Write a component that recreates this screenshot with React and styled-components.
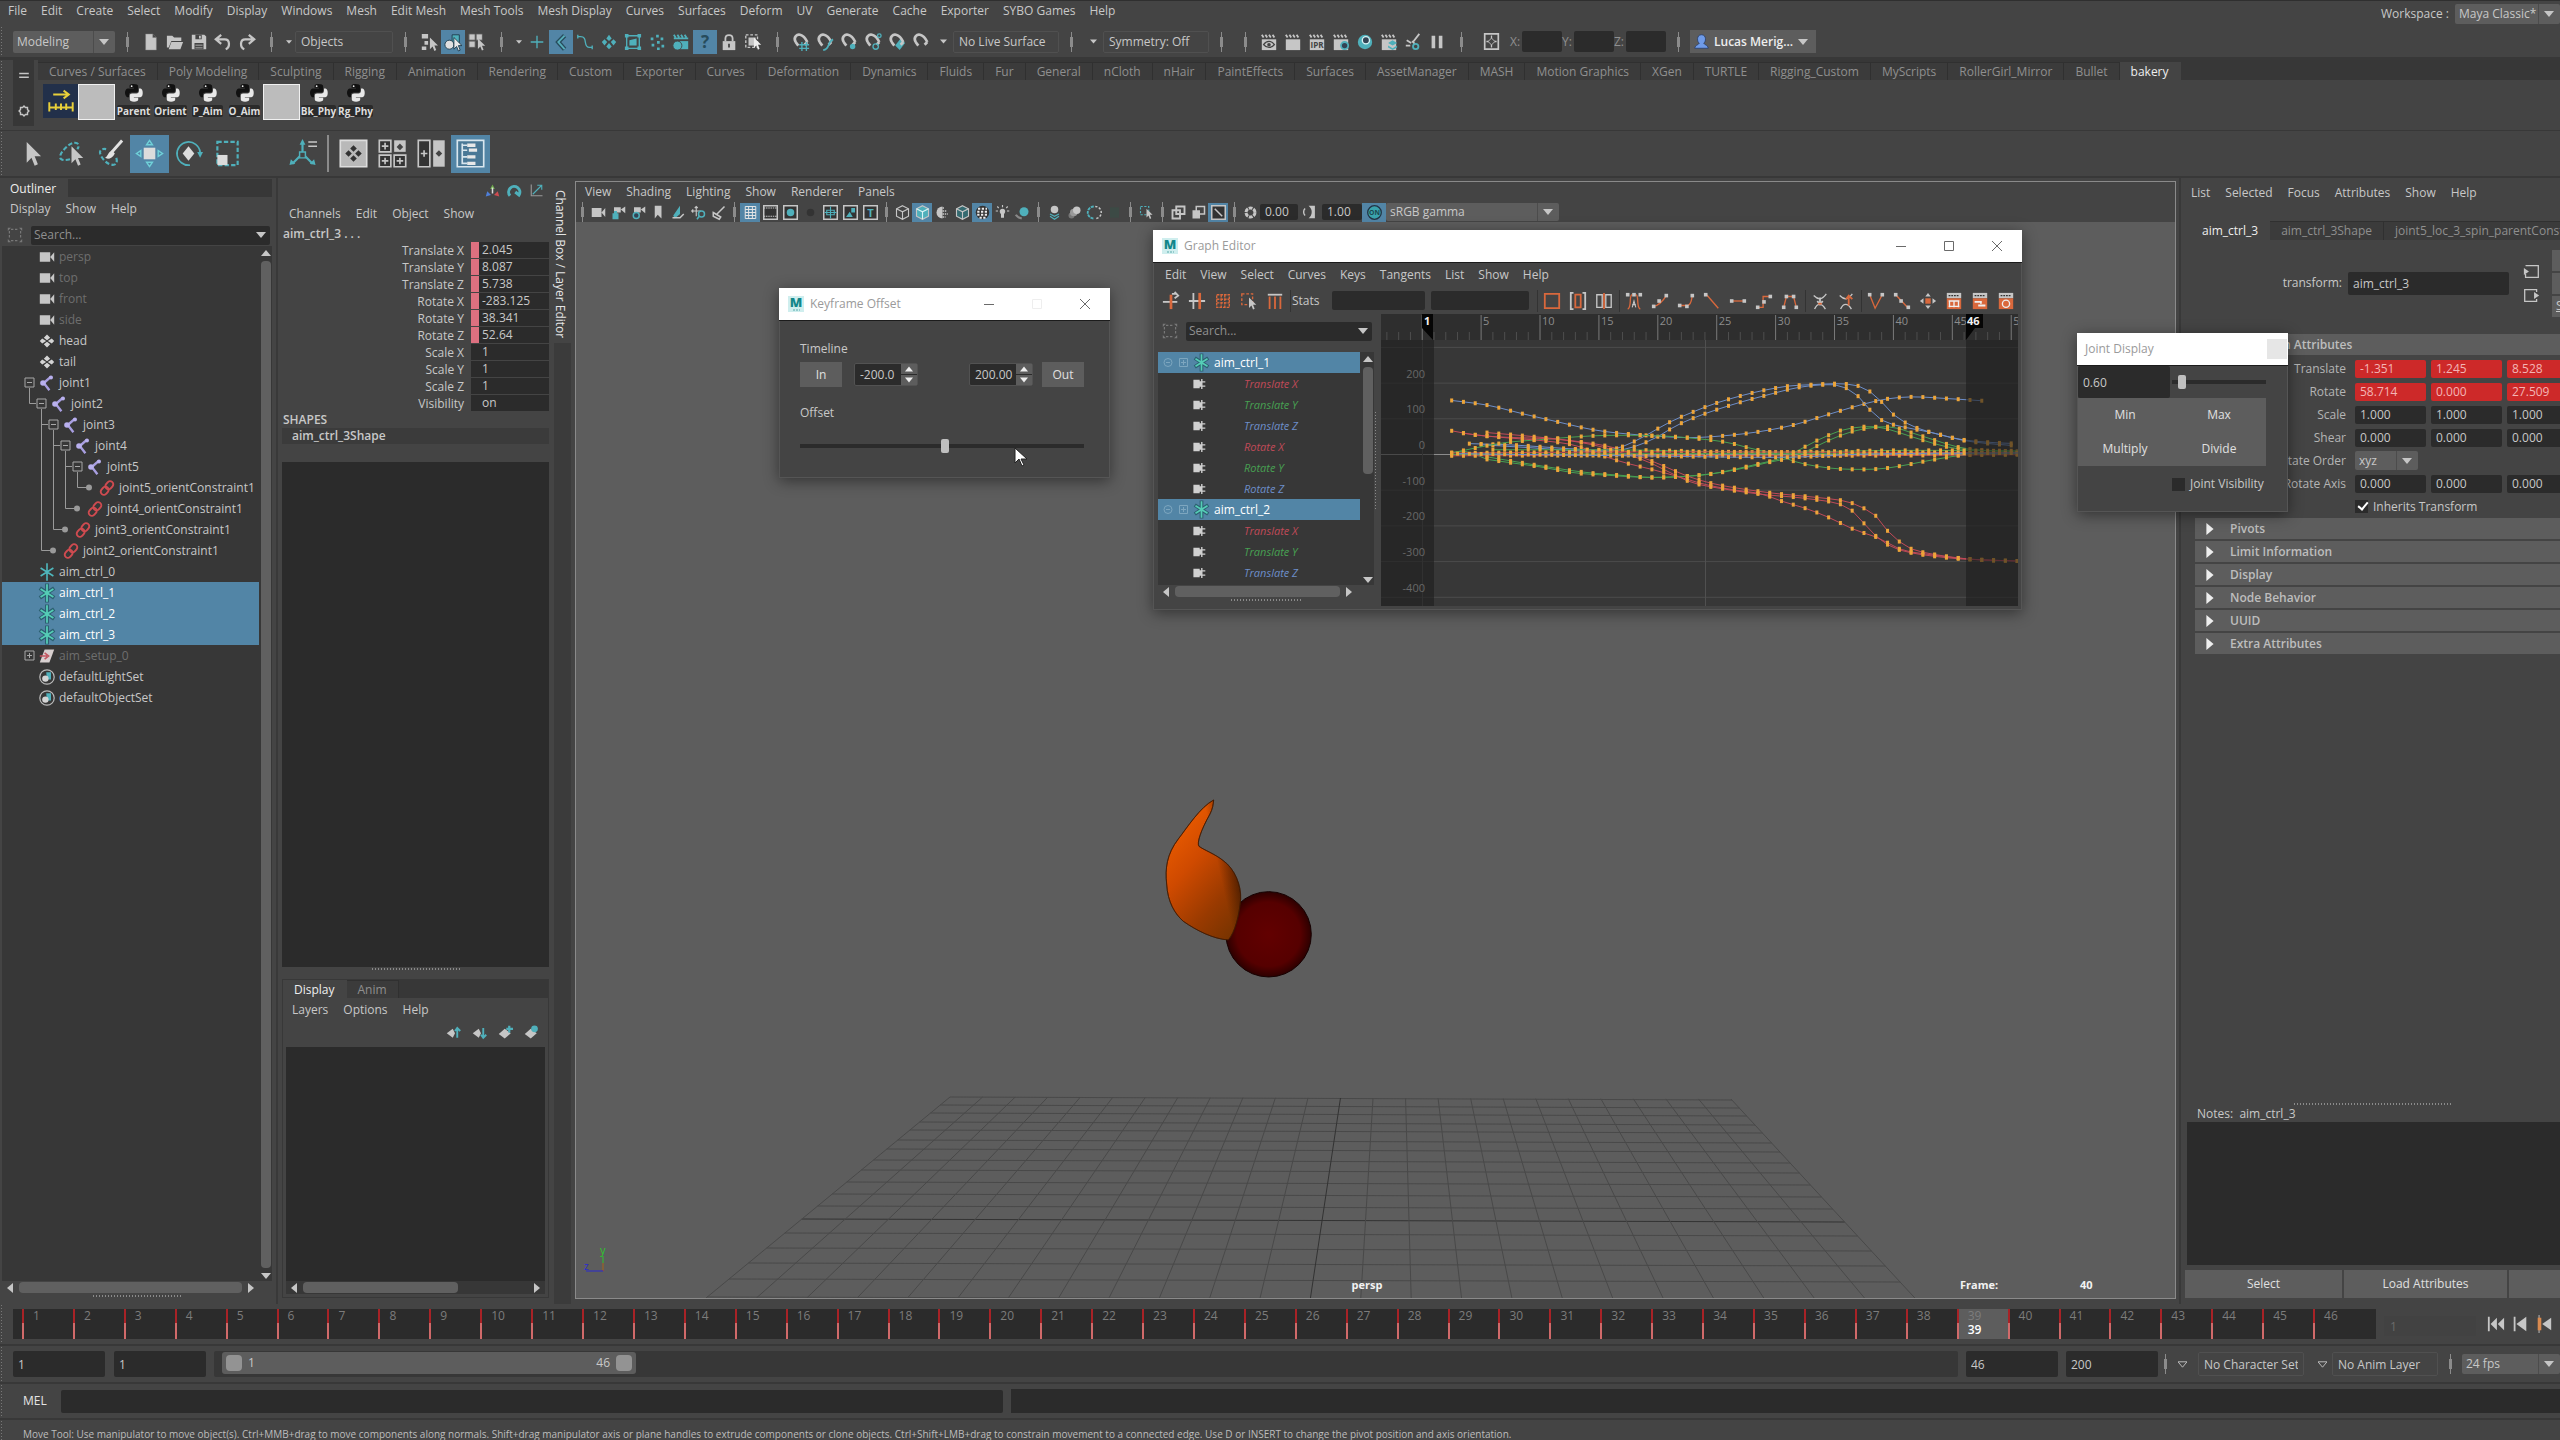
import React from 'react'
import styled, { createGlobalStyle, css } from 'styled-components'

const BASE = '#444444'
const MID = '#373737'
const DARK = '#2b2b2b'
const LIGHT = '#5d5d5d'
const BLUE = '#5285a6'
const TEXT = '#c8c8c8'
const DIM = '#8f8f8f'
const TEAL = '#4fb0bb'
const ICON = '#c6c6c6'
const ORANGE = '#d9683c'

const GlobalStyle = createGlobalStyle`
  * {
    box-sizing: border-box;
  }
  body {
    margin: 0;
    overflow: hidden;
    background: ${BASE};
  }
  body, button, input, select, textarea {
    font-family: 'Open Sans', 'Noto Sans', sans-serif;
    font-size: 12px;
    line-height: 16px;
    color: ${TEXT};
  }
  button, input, select, textarea {
    margin: 0;
    padding: 0;
    border: 0;
    outline: 0;
    border-radius: 0;
    background: none;
    min-width: 0;
  }
  ul {
    margin: 0;
    padding: 0;
    list-style: none;
  }
  svg {
    display: block;
    flex-shrink: 0;
  }
`

/* ---------- icons ---------- */

const stroke = (color, width = 1.5) => ({ fill: 'none', stroke: color, strokeWidth: width })

const Arrow = ({ x = 0, y = 0, s = 1, fill = ICON }) => (
  <path transform={`translate(${x} ${y}) scale(${s})`} d='M0 0v13l3-3 2 5 2-1-2-5h4z' fill={fill} />
)
const Clap = () => (
  <>
    <path d='M2 7h16v12H2z' fill={ICON} />
    <path d='M2 2l2 3M6 2l2 3M10 2l2 3M14 2l2 3' {...stroke(ICON, 2)} />
  </>
)
const Magnet = () => <path d='M4 10C1 4 6 1 9 2c4 1 6 4 8 8M4 10l3 4M17 10l-3 3' {...stroke(ICON, 3)} />
const Film = ({ children }) => (
  <>
    <path d='M1 1h18v18H1z' fill='#333' stroke={ICON} strokeWidth='2' />
    {children}
  </>
)
const Keys = ({ pts, line }) => (
  <>
    <path d={line} {...stroke(ORANGE, 1.5)} />
    {pts.map(([x, y]) => (
      <rect key={`${x}-${y}`} x={x - 2} y={y - 2} width='4' height='4' fill={ICON} />
    ))}
  </>
)
const Cube = ({ fill }) => (
  <>
    <path d='M10 1l8 4v10l-8 4-8-4V5z' fill={fill} stroke={ICON} strokeWidth='1.5' />
    <path d='M2 5l8 4 8-4M10 9v10' {...stroke(fill === TEAL ? '#d8f4f6' : ICON)} />
  </>
)
const Panel = ({ children }) => (
  <>
    <path d='M2 1h16v6H2z' fill={ICON} />
    <path d='M2 7h16v12H2z' fill={ORANGE} />
    <path d='M4 4h2M7 4h2M10 4h2M13 4h2' {...stroke('#333')} />
    {children}
  </>
)

const icons = {
  file: <path d='M4 1h8l4 4v14H4zM12 1v4h4' fill={ICON} stroke='#777' strokeWidth='.5' />,
  open: <path d='M1 3h6l2 2h8v4H6l-3 7H1zM6 10h13l-3 8H3z' fill={ICON} />,
  save: (
    <>
      <path d='M2 2h14l2 2v14H2z' fill={ICON} />
      <path d='M6 2h7v5H6zM5 11h10v7H5z' fill='#444' />
      <path d='M10 3h2v3h-2zM6 13h8v1H6zM6 16h8v1H6z' fill={ICON} />
    </>
  ),
  undo: <path d='M8 2L2 7l6 5M3 7h9c6 0 6 9 1 11' {...stroke(ICON, 2.5)} />,
  redo: <path d='M12 2l6 5-6 5M17 7H8c-6 0-6 9-1 11' {...stroke(ICON, 2.5)} />,
  hier: (
    <>
      <path d='M2 1h7v5H2zM5 9h4v4H5zM2 15h5v4H2z' fill={ICON} />
      <Arrow x={11} y={5} s={1} />
    </>
  ),
  objsel: (
    <>
      <path d='M9 2h8v9H9z' fill={TEAL} stroke='#1d3b4c' />
      <circle cx='6' cy='13' r='5' fill='#e0e0e0' stroke='#1d3b4c' />
      <g stroke='#1d3b4c'>
        <Arrow x={11} y={5} s={1} fill='#e8e8e8' />
      </g>
    </>
  ),
  compsel: (
    <>
      <path d='M1 1h7v7H1zM9 1h7v7H9zM1 9h7v7H1z' fill={ICON} stroke='#555' />
      <Arrow x={11} y={6} s={0.9} />
    </>
  ),
  plus: <path d='M10 3v14M3 10h14' {...stroke(TEAL, 1.5)} />,
  jointsel: (
    <>
      <path d='M14 3L7 10l7 8' {...stroke('#274c5c', 5)} />
      <path d='M14 3L7 10l7 8' {...stroke('#57aebb', 2)} />
    </>
  ),
  curvesel: <path d='M2 4h3c9 0 2 12 10 12h3M2 2v4M18 14v4' {...stroke(TEAL, 1.5)} />,
  surfsel: <path d='M10 2l3 4-3 3-3-3zM5 7l3 3-3 4-3-4zM15 7l3 3-3 4-3-4zM10 11l3 4-3 3-3-3z' fill={TEAL} />,
  defsel: (
    <>
      <path d='M3 3h14v14H3z' {...stroke(TEAL)} />
      <path d='M6 14V8l8-2v8M1 1h4v4H1zM15 1h4v4h-4zM1 15h4v4H1zM15 15h4v4h-4z' fill={TEAL} />
    </>
  ),
  dynsel: <path d='M3 5h3v3H3zM9 2h3v3H9zM14 5h3v3h-3zM4 12h3v3H4zM10 9h3v3h-3zM10 16h3v3h-3zM15 13h3v3h-3z' fill={TEAL} />,
  rendsel: (
    <>
      <path d='M2 6h16M2 2l2 3M6 2l2 3M10 2l2 3M14 2l2 3' {...stroke(TEAL, 2)} />
      <path d='M9 9h9v9H9z' fill={TEAL} />
      <circle cx='6' cy='14' r='5' fill={TEAL} stroke='#444' />
    </>
  ),
  misc: (
    <text x='10' y='17' textAnchor='middle' fontSize='19' fontWeight='700' fill='#274c5c'>
      ?
    </text>
  ),
  lock: (
    <>
      <path d='M6 9V6c0-5 8-5 8 0v3' {...stroke(ICON, 2)} />
      <path d='M3 9h14v10H3z' fill={ICON} />
      <path d='M9 12h2v4H9z' fill='#444' />
    </>
  ),
  hilite: (
    <>
      <path d='M2 2h13v14H2z' {...stroke(ICON, 1.5)} strokeDasharray='3 2' />
      <path d='M5 5h8v9H5z' fill={ICON} />
      <Arrow x={11} y={5} s={0.9} fill='#eee' />
    </>
  ),
  snapGrid: (
    <>
      <Magnet />
      <path d='M8 13h11M8 17h11M11 10v10M16 10v10' {...stroke(TEAL)} />
    </>
  ),
  snapCurve: (
    <>
      <Magnet />
      <path d='M8 19c8-1 4-9 11-12' {...stroke(TEAL, 2)} />
    </>
  ),
  snapPoint: (
    <>
      <Magnet />
      <circle cx='14' cy='15' r='3' fill={TEAL} />
    </>
  ),
  snapCenter: (
    <>
      <Magnet />
      <circle cx='13' cy='15' r='3' {...stroke(TEAL)} />
      <circle cx='17' cy='3' r='2' {...stroke(TEAL)} />
    </>
  ),
  snapPlane: (
    <>
      <path d='M8 14l6-8 5 5-6 8z' fill={TEAL} />
      <Magnet />
    </>
  ),
  snapLive: <Magnet />,
  renderView: (
    <>
      <Clap />
      <path d='M4 13c3-5 9-5 12 0-3 4-9 4-12 0z' {...stroke('#444')} />
      <circle cx='10' cy='13' r='2' fill='#444' />
    </>
  ),
  render: <Clap />,
  ipr: (
    <>
      <Clap />
      <text x='10' y='17' textAnchor='middle' fontSize='9' fontWeight='700' fill='#444'>
        IPR
      </text>
    </>
  ),
  renderSet: (
    <>
      <Clap />
      <circle cx='14' cy='14' r='4' fill='#345' stroke={TEAL} strokeWidth='2' />
    </>
  ),
  hyper: (
    <>
      <circle cx='10' cy='10' r='8' fill={TEAL} />
      <circle cx='11' cy='8' r='4' fill='#345' stroke='#d8f4f6' strokeWidth='1.5' />
    </>
  ),
  layersR: (
    <>
      <Clap />
      <path d='M14 8l5 3-5 3-5-3zM9 14l5 3 5-3v2l-5 3-5-3z' fill={TEAL} />
    </>
  ),
  lightEd: (
    <>
      <path d='M17 1l-7 9M3 8l5 3M2 14h5M9 9l3 3' {...stroke(ICON, 2)} />
      <circle cx='13' cy='15' r='3' {...stroke(TEAL, 2)} />
    </>
  ),
  pause: <path d='M4 3h4v14H4zM12 3h4v14h-4z' fill={ICON} />,
  pivot: (
    <>
      <path d='M2 1h16v18H2z' {...stroke(ICON, 2)} />
      <path d='M10 3v14M4 10h12' {...stroke(ICON)} />
      <path d='M10 6l4 4-4 4-4-4z' fill='#444' stroke={ICON} />
    </>
  ),
  user: <path d='M10 1c7 0 6 10 3 11 1 3 5 2 6 7H1c1-5 5-4 6-7C4 11 3 1 10 1z' fill='#6f9be8' stroke='#233a66' />,
  select: <Arrow x={6} y={2} s={1.1} />,
  lasso: (
    <>
      <path d='M9 14C1 16 0 12 6 6s11-3 8 1' {...stroke(TEAL)} strokeDasharray='3 1.5' />
      <Arrow x={10} y={5} s={0.9} />
    </>
  ),
  paint: (
    <>
      <path d='M14 13c2 6-4 6-8 2S1 6 7 7' {...stroke(TEAL)} strokeDasharray='3 1.5' />
      <path d='M18 1l-7 8' {...stroke('#e2e2e2', 2)} />
      <path d='M11 8l2 2c-2 4-5 4-7 3 2 0 2-4 5-5z' fill='#e2e2e2' />
    </>
  ),
  move: (
    <>
      <path d='M6 6h8v8H6z' fill='#dcdcdc' />
      <path d='M10 1l2 3H8zM10 19l2-3H8zM1 10l3-2v4zM19 10l-3-2v4z' {...stroke('#6fd0d8', 1)} />
    </>
  ),
  rotate: (
    <>
      <path d='M10 5l4 5-4 5-4-5z' fill='#dcdcdc' />
      <path d='M11 18A8 8 0 1 1 18 9' {...stroke(TEAL, 1.2)} />
      <path d='M16 9h4l-2 4z' fill={TEAL} />
    </>
  ),
  scale: (
    <>
      <path d='M3 2h14v16H3z' {...stroke(TEAL)} strokeDasharray='3 1.5' />
      <path d='M3 11h7v7H3z' fill='#dcdcdc' />
    </>
  ),
  axes: (
    <>
      <path d='M10 10V3M10 10l-7 7M10 10l7 7' {...stroke(TEAL)} />
      <path d='M10 0l2 4H8zM1 18l1-4 3 3zM19 18l-1-4-3 3z' fill={TEAL} />
      <path d='M8 9h4v4H8z' fill='#444' stroke={TEAL} />
      <path d='M14 2h6M14 5h6' {...stroke(ICON, 1)} />
    </>
  ),
  single: (
    <>
      <path d='M2 2h16v16H2z' fill='#b9b9b9' stroke='#ddd' />
      <path d='M10 5l2 2-2 2-2-2zM10 11l2 2-2 2-2-2zM7 8l2 2-2 2-2-2zM13 8l2 2-2 2-2-2z' fill='#333' />
    </>
  ),
  four: (
    <>
      <path d='M2 2h7v7H2zM2 11h7v7H2zM11 11h7v7h-7z' fill='#333' stroke={ICON} />
      <path d='M11 2h7v7h-7z' fill={ICON} />
      <path d='M5.500 3.500v4M3.500 5.500h4M5.500 12.500v4M3.500 14.500h4M14.500 12.500v4M12.500 14.500h4' {...stroke(ICON, 1)} />
      <path d='M14.500 4l2 2-2 2-2-2z' fill='#444' />
    </>
  ),
  two: (
    <>
      <path d='M2 2h7v16H2z' fill='#333' stroke={ICON} />
      <path d='M11 2h7v16h-7z' fill={ICON} />
      <path d='M5.500 8v4M3.500 10h4' {...stroke(ICON, 1)} />
      <path d='M14.500 8l2 2-2 2-2-2z' fill='#444' />
    </>
  ),
  outl: (
    <>
      <path d='M2 2h16v16H2z' fill='#4a7896' stroke='#d8e6ee' />
      <path d='M5 4v12h3M5 8h3M5 12h3M5 5h3' {...stroke('#d8e6ee', 1)} />
      <path d='M8 4h5v2H8zM9 7h5v2H9zM8 11h5v2H8zM8 15h5v2H8z' fill='#e8e8e8' />
    </>
  ),
  bars: <path d='M2 6h16M2 12h16' {...stroke(ICON, 2.5)} />,
  gear: <path d='M10 3l2 2 3 0 0 3 2 2-2 2 0 3-3 0-2 2-2-2-3 0 0-3-2-2 2-2 0-3 3 0z' {...stroke(ICON, 2)} />,
  frame: (
    <>
      <path d='M5 3h10M5 17h10M3 5v10M17 5v10' {...stroke('#777')} strokeDasharray='3 2' />
      <path d='M1 1h4l-4 4zM19 1v4l-4-4zM1 19v-4l4 4zM19 19h-4l4-4z' fill='#777' />
    </>
  ),
  camera: <path d='M1 4h13v12H1zM14 10l5-6v12z' fill={ICON} />,
  camLock: (
    <>
      <path d='M4 3h9v7H4zM13 6l6-4v9z' fill={ICON} />
      <path d='M2 11h8v8H2zM4 11V8h4v3' fill={TEAL} />
    </>
  ),
  camSet: (
    <>
      <path d='M4 3h9v7H4zM13 6l6-4v9z' fill={ICON} />
      <circle cx='7' cy='14' r='4' fill='#345' stroke={TEAL} strokeWidth='2' />
    </>
  ),
  bookmark: <path d='M5 1h9v17l-5-5-4 5z' fill={ICON} />,
  imgPlane: (
    <>
      <path d='M3 14L12 1v11l-7 6z' fill={TEAL} />
      <path d='M2 17h10l5-5' {...stroke(ICON, 2)} />
    </>
  ),
  panZoom: (
    <>
      <path d='M7 2v13M1 8h12M5 4l2-2 2 2M3 6L1 8l2 2' {...stroke(ICON)} />
      <circle cx='14' cy='12' r='4' {...stroke(TEAL, 2)} />
      <path d='M11 15l-3 4' {...stroke(TEAL, 2)} />
    </>
  ),
  grease: <path d='M18 2L8 12M3 10l5 3 5 3-2 3-8-4z' {...stroke(ICON, 2)} />,
  grid: <path d='M3 2h14v16H3zM7.500 2v16M12.500 2v16M3 6h14M3 10h14M3 14h14' {...stroke('#e6e6e6', 1.3)} />,
  filmGate: <Film><path d='M1 4h18M1 15h18' {...stroke(ICON, 1.5)} strokeDasharray='2 1' /></Film>,
  resGate: <Film><circle cx='10' cy='10' r='5' fill={TEAL} /></Film>,
  mask: <circle cx='10' cy='10' r='5' fill='#333' />,
  fieldChart: <Film><path d='M10 2v16M2 10h16M5 7h10v6H5z' {...stroke(TEAL)} /></Film>,
  safeAct: <Film><path d='M4 16l5-7 4 7zM11 4h5v6h-5z' fill={TEAL} /></Film>,
  safeTitle: (
    <Film>
      <text x='10' y='16' textAnchor='middle' fontSize='15' fontWeight='700' fill={TEAL}>
        T
      </text>
    </Film>
  ),
  wire: <Cube fill='none' />,
  shaded: <Cube fill={TEAL} />,
  halfball: (
    <>
      <path d='M10 2a8 8 0 0 0 0 16z' fill={ICON} />
      <path d='M10 4h3M10 8h6M10 12h7M10 16h4' {...stroke(ICON, 2)} strokeDasharray='2 1' />
    </>
  ),
  wireShade: <Cube fill='#356a70' />,
  checker: (
    <>
      <circle cx='10' cy='10' r='9' fill='#333' />
      <path d='M4 5h12M3 9h14M3 13h14M6 17h9' {...stroke('#eee', 2.5)} strokeDasharray='3 2' />
    </>
  ),
  bulb: (
    <>
      <path d='M10 5c5 0 4 6 2 7v5H8v-5C6 11 5 5 10 5z' fill={ICON} />
      <path d='M10 0v3M1 8h3M16 8h3M3 2l2 2M17 2l-2 2' {...stroke(ICON)} />
    </>
  ),
  shadow: (
    <>
      <circle cx='12' cy='9' r='6' fill={TEAL} />
      <path d='M1 13c2 3 4 4 8 5' {...stroke('#888', 3)} />
    </>
  ),
  ao: (
    <>
      <circle cx='10' cy='6' r='5' fill={ICON} />
      <path d='M4 12l6 3 6-3M4 15l6 4 6-4' {...stroke(TEAL)} />
    </>
  ),
  mblur: (
    <>
      <circle cx='6' cy='14' r='4' fill='#777' />
      <circle cx='9' cy='10' r='5' fill='#999' />
      <circle cx='13' cy='7' r='5' fill={ICON} />
    </>
  ),
  msaa: (
    <>
      <path d='M9 2a8 8 0 0 0 0 16' {...stroke(TEAL, 2.5)} strokeDasharray='4 1' />
      <path d='M11 2a8 8 0 0 1 0 16' {...stroke(ICON, 2)} strokeDasharray='3 2' />
    </>
  ),
  dof: <path d='M4 3h12v14H4z' fill='#3c4a45' />,
  isolate: (
    <>
      <path d='M2 2h11v11H2z' {...stroke(TEAL)} strokeDasharray='3 2' />
      <Arrow x={10} y={5} s={0.9} />
    </>
  ),
  copyA: <path d='M7 2h11v10H7zM2 7h10v11H2z' {...stroke(ICON, 2.5)} />,
  copyB: (
    <>
      <path d='M7 2h11v10H7z' {...stroke(ICON, 2)} />
      <path d='M2 7h10v11H2z' fill={ICON} />
    </>
  ),
  diag: <Film><path d='M5 5l10 10' {...stroke(ICON, 2)} /></Film>,
  aperture: <circle cx='10' cy='10' r='6' {...stroke(ICON, 4)} strokeDasharray='5 1.300' />,
  gammaIc: (
    <>
      <path d='M3 5a7 7 0 0 0 0 10' {...stroke(ICON, 2)} />
      <path d='M8 1h9v18H8c6-5 6-13 0-18z' fill={ICON} />
    </>
  ),
  on: (
    <>
      <circle cx='10' cy='10' r='8' fill='#3aa3ad' stroke='#234' strokeWidth='1.5' />
      <text x='10' y='13' textAnchor='middle' fontSize='8' fontWeight='700' fill='#1c4850'>
        ON
      </text>
    </>
  ),
  mesh: (
    <path d='M10 2l4 4-4 3-4-3zM4 7l5 3-5 3-3-3zM16 7l3 3-3 3-5-3zM10 11l4 3-4 4-4-4z' fill='#d4d4d4' />
  ),
  joint: (
    <>
      <path d='M15 2L6 10l7 9' {...stroke('#a89ee0', 3)} />
      <circle cx='15' cy='3' r='2.500' fill='#b9b0ee' />
      <circle cx='5' cy='10' r='3.500' fill='#b9b0ee' />
    </>
  ),
  chain: (
    <g transform='rotate(-50 10 10)'>
      <rect x='0' y='6' width='11' height='8' rx='4' {...stroke('#cf4b50', 2.4)} />
      <rect x='9' y='6' width='11' height='8' rx='4' {...stroke('#cf4b50', 2.4)} />
    </g>
  ),
  star: <path d='M10 -1v22M2 5l16 10M18 5L2 15' {...stroke('#4fb8bd', 2)} />,
  starSel: (
    <>
      <path d='M10 -2v24M1 4l18 12M19 4L1 16' {...stroke('#2c5f70', 5)} />
      <path d='M10 -1v22M2 5l16 10M18 5L2 15' {...stroke('#55cdb6', 2.2)} />
    </>
  ),
  group: (
    <>
      <path d='M7 2h12l-6 16H1z' fill='#d8d0d0' />
      <path d='M1 10h9M7 6l5 4-5 4' {...stroke('#c25560', 2)} />
    </>
  ),
  set: (
    <>
      <circle cx='10' cy='10' r='9' {...stroke('#bbb', 1.5)} />
      <path d='M9 4h6v9h-5z' fill={TEAL} />
      <circle cx='8' cy='12' r='4' fill='#d4d4d4' />
    </>
  ),
  plug: <path d='M2 4h9v2h2V3h2v3h4v2h-4v4h4v2h-4v3h-2v-3h-2v2H2z' fill='#d0d0d0' />,
  manip: (
    <>
      <path d='M10 2l3 6H7z' fill='#6fae4c' />
      <path d='M9 6h2v8H9z' fill='#ddd' />
      <path d='M1 18l2-7 5 5z' fill='#4f7fd8' />
      <path d='M19 18l-2-7-5 5z' fill='#cf4b50' />
    </>
  ),
  speed: <path d='M4 17A7.500 7.500 0 1 1 16 16l-5-4' {...stroke(TEAL, 4)} />,
  graphArrow: (
    <>
      <path d='M3 2v15h15' {...stroke('#999')} />
      <path d='M5 15L17 3M11 3h6v6' {...stroke(TEAL)} />
    </>
  ),
  layUp: (
    <>
      <path d='M1 11l8-6 3 6-3 6z' fill={ICON} />
      <path d='M15 17V5M12 8l3-4 4 4' {...stroke(TEAL, 2.5)} />
    </>
  ),
  layDown: (
    <>
      <path d='M1 11l8-6 3 6-3 6z' fill={ICON} />
      <path d='M15 4v12M12 13l3 4 4-4' {...stroke(TEAL, 2.5)} />
    </>
  ),
  layNew: (
    <>
      <path d='M1 12l8-7 8 6-8 7z' fill={ICON} />
      <path d='M15 1v9M11 5h9' {...stroke(TEAL, 3)} />
    </>
  ),
  layObj: (
    <>
      <path d='M1 12l8-7 8 6-8 7z' fill={ICON} />
      <circle cx='14' cy='5' r='4.500' fill={TEAL} />
    </>
  ),
  gMove: (
    <>
      <path d='M1 11h16' {...stroke(ICON, 2)} />
      <path d='M10 3v16' {...stroke(ORANGE, 3)} />
      <path d='M11 2h5M14 0l4 4-4 3' {...stroke(ICON, 2)} />
    </>
  ),
  gInsert: (
    <>
      <path d='M6 1v18M1 10h18' {...stroke(ICON, 2)} />
      <path d='M13 1v18' {...stroke(ORANGE, 3)} />
    </>
  ),
  gLattice: <path d='M3 3h14v14H3zM8 3v14M12 3v14M3 8h14M3 12h14' {...stroke(ORANGE)} strokeDasharray='3 1' />,
  gRegion: (
    <>
      <path d='M2 2h12v12H2z' {...stroke(ORANGE)} strokeDasharray='3 2' />
      <Arrow x={10} y={6} s={0.9} />
    </>
  ),
  gRetime: (
    <>
      <path d='M2 3h16' {...stroke(ICON, 2)} />
      <path d='M4 5v14M10 5v14M16 5v14' {...stroke(ORANGE, 2)} />
    </>
  ),
  gFrame: <path d='M2 2h16v16H2z' {...stroke(ORANGE, 2)} />,
  gPlay: (
    <>
      <path d='M5 1H2v18h3M15 1h3v18h-3' {...stroke(ICON, 2)} />
      <path d='M7 3h6v14H7z' {...stroke(ORANGE, 2)} />
    </>
  ),
  gCenter: (
    <>
      <path d='M2 3h6v14H2zM12 3h6v14h-6z' {...stroke(ICON)} />
      <path d='M10 1v18' {...stroke(ORANGE, 2)} />
    </>
  ),
  tAuto: (
    <>
      <Keys line='M3 19c5-2 1-16 5-16M17 19c-5-2-1-16-5-16' pts={[[3, 3], [17, 3], [10, 3]]} />
      <path d='M8 17l2-7 2 7M8 14h4' {...stroke(ICON, 1.2)} />
    </>
  ),
  tSpline: <Keys line='M3 16c5-1 9-4 14-12' pts={[[3, 16], [9, 10], [17, 4]]} />,
  tClamp: <Keys line='M3 15h9c4-1 4-6 5-11' pts={[[3, 15], [11, 16], [17, 4]]} />,
  tLinear: <Keys line='M4 3l13 15' pts={[[3, 3]]} />,
  tFlat: <Keys line='M3 10h14' pts={[[3, 10], [17, 10]]} />,
  tStep: <Keys line='M3 17h6V5h8' pts={[[3, 17], [10, 11], [17, 5]]} />,
  tPlat: <Keys line='M3 17l3-12h8l3 12' pts={[[3, 17], [6, 5], [14, 5], [17, 17]]} />,
  buffer: (
    <>
      <path d='M3 4c5 5 9 5 14-2M4 19c3-7 8-7 12 0' {...stroke(ICON, 1.5)} />
      <path d='M10 6v7M7 10l3 4 3-4' {...stroke(ICON, 2)} />
      <path d='M8 13h4' {...stroke(ORANGE, 2)} />
    </>
  ),
  bufferUp: (
    <>
      <path d='M3 4c5 5 9 5 14-2M4 19c3-7 8-7 12 0' {...stroke(ICON, 1.5)} />
      <path d='M13 15V4M10 8l3-4 4 4' {...stroke(ORANGE, 2)} />
    </>
  ),
  brk: <Keys line='M3 3l6 15 8-15' pts={[[3, 3], [17, 3]]} />,
  unify: <Keys line='M3 3l14 15' pts={[[3, 3], [9, 10], [17, 17]]} />,
  free: (
    <>
      <path d='M10 1l3 4H7zM10 19l3-4H7zM1 10l4-3v6zM19 10l-4-3v6z' fill={ICON} />
      <path d='M7 7h6v6H7z' fill={ORANGE} />
    </>
  ),
  pnlA: <Panel><path d='M5 10v7M10 10v7M15 10v7M4 10h12M4 16h12' {...stroke('#eee')} /></Panel>,
  pnlB: <Panel><path d='M4 11h7v2M8 15h8' {...stroke('#eee', 2)} /></Panel>,
  pnlC: <Panel><circle cx='10' cy='13' r='4' {...stroke('#eee')} /></Panel>,
  ioIn: (
    <>
      <path d='M3 3h15v14H3v-4' {...stroke(ICON, 1.5)} />
      <path d='M1 6l6 4-6 4z' fill={ICON} />
    </>
  ),
  ioOut: (
    <>
      <path d='M16 6V3H2v14h14v-3' {...stroke(ICON, 1.5)} />
      <path d='M13 6l6 4-6 4z' fill={ICON} />
    </>
  ),
  toStart: <path d='M1 2h2v16H1zM11 3v14l-7-7zM19 3v14l-7-7z' fill={ICON} />,
  stepBack: <path d='M3 2h2v16H3zM17 2v16L6 10z' fill={ICON} />,
  stepKey: (
    <>
      <path d='M4 0h1v20H4z' fill={ICON} />
      <path d='M3 3h4v14H3z' fill='#d98a4f' />
      <path d='M18 3v14L8 10z' fill={ICON} />
    </>
  ),
  python: (
    <g transform='scale(.82)'>
      <path
        d='M14.25.18l.9.2.73.26.59.3.45.32.34.34.25.34.16.33.1.3.04.26.02.2-.01.13V8.5l-.05.63-.13.55-.21.46-.26.38-.3.31-.33.25-.35.19-.35.14-.33.1-.3.07-.26.04-.21.02H8.77l-.69.05-.59.14-.5.22-.41.27-.33.32-.27.35-.2.36-.15.37-.1.35-.07.32-.04.27-.02.21v3.06H3.17C1 17 0 14 0 11.900S1 6.200 3.700 6h8.300v-.83H6.180V2.400C6.200.8 8 0 11.700 0z'
        fill='#111'
      />
      <circle cx='9' cy='3' r='1.200' fill='#eee' />
      <path
        d='M21.04 6.110c2 .3 3 3 3 6s-1 5.500-3.300 5.800h-8.700v.82h5.840v2.760c0 1.600-2 2.400-5.600 2.400-3.700 0-5.800-1-5.800-2.800v-5.340c0-1.900 1.200-3 3.100-3h5.840c2.300 0 3.500-1.500 3.500-3.600V6.110z'
        fill='#e8e8e8'
      />
    </g>
  ),
  shiftKeys: (
    <>
      <path d='M4 5h11M12 2l4 3-4 3' {...stroke('#e8cf3a', 1.5)} />
      <path d='M1 11v7M19 11v7M1 15h18M6 12v5M10 12v5M14 12v5' {...stroke('#e8cf3a', 1.5)} />
    </>
  ),
}

const Icon = ({ name, size = 16 }) => (
  <svg width={size} height={size} viewBox='0 0 20 20' aria-hidden='true' overflow='visible'>
    {icons[name]}
  </svg>
)

const Tri = ({ dir = 'down', size = 10, color = ICON, outline }) => {
  const d = { down: 'M0 2h10L5 8z', up: 'M0 8h10L5 2z', left: 'M8 0v10L2 5z', right: 'M2 0v10l6-5z' }[dir]
  return (
    <svg width={size} height={size} viewBox='0 0 10 10' aria-hidden='true'>
      <path d={d} fill={outline ? 'none' : color} stroke={outline ? color : 'none'} />
    </svg>
  )
}

/* ---------- shared parts ---------- */

const Shell = styled.div`
  display: flex;
  flex-direction: column;
  height: 100vh;
  overflow: hidden;
  position: relative;
  background: ${BASE};
`
const Menu = styled.nav`
  display: flex;
  align-items: center;
  gap: ${(p) => p.$gap || 15}px;
  height: ${(p) => p.$h || 20}px;
  padding-left: ${(p) => p.$x || 8}px;
  flex-shrink: 0;
  white-space: nowrap;
`
const MenuItem = styled.button``

const MenuBar = ({ items, ...rest }) => (
  <Menu {...rest}>
    {items.map((t) => (
      <MenuItem key={t}>{t}</MenuItem>
    ))}
  </Menu>
)

const Handle = styled.span`
  width: 13px;
  align-self: stretch;
  flex-shrink: 0;
  background: radial-gradient(#787878 1px, transparent 1px) 0 0 / 3px 3px repeat-y;
`
const IconButton = styled.button`
  display: flex;
  align-items: center;
  justify-content: center;
  flex-shrink: 0;
  width: ${(p) => p.$w || 24}px;
  height: ${(p) => p.$h || 24}px;
  background: ${(p) => (p.$on ? BLUE : 'none')};
`
const Sep = styled.span`
  flex-shrink: 0;
  width: ${(p) => p.$w || 24}px;
  height: 20px;
  background:
    linear-gradient(#8b8b8b, #8b8b8b) center / 3px 10px no-repeat,
    linear-gradient(#8b8b8b, #8b8b8b) center / 1px 20px no-repeat;
`
const Drop = styled.span`
  display: flex;
  justify-content: center;
  flex-shrink: 0;
  width: ${(p) => (p.$wide ? 20 : 12)}px;
`
const Field = styled.input`
  width: ${(p) => p.$w}px;
  height: ${(p) => p.$h || 20}px;
  flex-shrink: 0;
  padding: 0 5px;
  border-radius: 2px;
  background: ${DARK};
  ${(p) =>
    p.$flat &&
    css`
      background: ${BASE};
      border: 1px solid #505050;
    `}
`
const SelectWrap = styled.span`
  position: relative;
  display: block;
  flex-shrink: 0;
  width: ${(p) => p.$w}px;
  height: ${(p) => p.$h || 20}px;
  svg {
    position: absolute;
    right: 6px;
    top: calc(50% - 5px);
    pointer-events: none;
  }
`
const SelectBox = styled.select`
  appearance: none;
  width: 100%;
  height: 100%;
  padding: 0 4px;
  border-radius: 2px;
  background: linear-gradient(#4c4c4c, #4c4c4c) right 21px top / 1px 100% no-repeat ${LIGHT};
`
const Select = ({ label, value, w, h }) => (
  <SelectWrap $w={w} $h={h}>
    <SelectBox aria-label={label} defaultValue={value}>
      <option>{value}</option>
    </SelectBox>
    <Tri />
  </SelectWrap>
)

const Dots = styled.span`
  display: block;
  align-self: center;
  width: ${(p) => p.$w}px;
  height: 2px;
  margin: 1px 0;
  background: radial-gradient(#8a8a8a 1px, transparent 1px) 0 0 / 3px 2px;
`
const HScroll = styled.div`
  display: flex;
  align-items: center;
  gap: 3px;
  height: 13px;
  padding: 0 3px;
  flex-shrink: 0;
`
const VScroll = styled.div`
  display: flex;
  flex-direction: column;
  align-items: center;
  gap: 2px;
  width: 12px;
  padding-top: 2px;
  flex-shrink: 0;
`
const Thumb = styled.span`
  flex: ${(p) => p.$flex || 1};
  align-self: stretch;
  margin: 1px;
  border-radius: 4px;
  background: #606060;
`
const Rest = styled.span`
  flex: ${(p) => p.$flex || 1};
`
const SearchRow = styled.div`
  display: flex;
  align-items: center;
  gap: 8px;
  height: 20px;
  margin-top: ${(p) => p.$top || 0}px;
  padding: ${(p) => p.$pad || '0 6px 0 7px'};
  flex-shrink: 0;
`
const SearchBox = styled.span`
  display: flex;
  align-items: center;
  flex: 1;
  height: 19px;
  padding: 0 4px 0 3px;
  border-radius: 2px;
  background: ${DARK};
  input {
    flex: 1;
  }
  input::placeholder {
    color: ${DIM};
  }
`
const Search = (props) => (
  <SearchRow {...props}>
    <Icon name='frame' size={16} />
    <SearchBox>
      <input type='search' placeholder='Search...' aria-label='Search' />
      <Tri />
    </SearchBox>
  </SearchRow>
)

/* ---------- top bars ---------- */

const TopMenu = styled.header`
  display: flex;
  justify-content: space-between;
  height: 26px;
  padding-top: 1px;
  border-top: 1px solid #2f2f2f;
  flex-shrink: 0;
`
const Workspace = styled.label`
  display: flex;
  align-items: center;
  gap: 6px;
  height: 24px;
`
const Bar = styled.div`
  display: flex;
  align-items: center;
  height: ${(p) => p.$h}px;
  flex-shrink: 0;
  border-bottom: ${(p) => p.$line || 1}px solid #383838;
  overflow: hidden;
`
const AxisLabel = styled.label`
  display: flex;
  align-items: center;
  flex-shrink: 0;
  width: 52px;
  span {
    width: 12px;
    color: ${DIM};
  }
`
const UserButton = styled.button`
  display: flex;
  align-items: center;
  gap: 5px;
  width: 126px;
  height: 23px;
  padding: 0 4px;
  flex-shrink: 0;
  background: ${LIGHT};
  font-weight: 600;
  color: #eee;
`

const StatusLine = () => {
  const run = (list, on = []) =>
    list.map((n) => (
      <IconButton key={n} aria-label={n} $on={on.includes(n)}>
        <Icon name={n} size={18} />
      </IconButton>
    ))
  return (
    <Bar $h={34} $line={3}>
      <Handle />
      <Select label='Menu set' value='Modeling' w={102} h={22} />
      <Sep />
      {run(['file', 'open', 'save', 'undo', 'redo'])}
      <Sep />
      <Drop><Tri size={6} /></Drop>
      <Field $w={98} $h={22} $flat aria-label='Selection mask' defaultValue='Objects' />
      <Sep />
      {run(['hier', 'objsel', 'compsel'], ['objsel'])}
      <Sep />
      <Drop><Tri size={6} /></Drop>
      {run(
        ['plus', 'jointsel', 'curvesel', 'surfsel', 'defsel', 'dynsel', 'rendsel', 'misc', 'lock', 'hilite'],
        ['jointsel', 'misc']
      )}
      <Sep />
      {run(['snapGrid', 'snapCurve', 'snapPoint', 'snapCenter', 'snapPlane', 'snapLive'])}
      <Drop $wide><Tri size={7} /></Drop>
      <Field $w={106} $h={22} $flat aria-label='Live surface' defaultValue='No Live Surface' />
      <Sep />
      <Drop $wide><Tri size={7} /></Drop>
      <Field $w={106} $h={22} $flat aria-label='Symmetry' defaultValue='Symmetry: Off' />
      <Sep />
      <Sep />
      {run(['renderView', 'render', 'ipr', 'renderSet', 'hyper', 'layersR', 'lightEd', 'pause'])}
      <Sep />
      <IconButton $w={37} aria-label='Input mode'><Icon name='pivot' size={17} /></IconButton>
      {['X:', 'Y:', 'Z:'].map((a) => (
        <AxisLabel key={a}>
          <span>{a}</span>
          <Field $w={40} $h={21} />
        </AxisLabel>
      ))}
      <Sep />
      <UserButton>
        <Icon name='user' size={15} />
        Lucas Merig...
        <Tri />
      </UserButton>
    </Bar>
  )
}

const Shelf = styled.section`
  display: flex;
  height: 71px;
  flex-shrink: 0;
  border-bottom: 1px solid #383838;
`
const ShelfGutter = styled.div`
  display: flex;
  flex-direction: column;
  justify-content: space-between;
  align-items: center;
  width: 21px;
  margin: 0 4px 4px 0;
  padding: 10px 0 8px;
  background: ${MID};
`
const ShelfBody = styled.div`
  flex: 1;
  min-width: 0;
`
const ShelfTabs = styled.div`
  display: flex;
  height: 20px;
  padding-top: 2px;
  background: ${MID};
`
const Tab = styled.button`
  padding: 0 11px;
  flex-shrink: 0;
  border: 1px solid ${(p) => (p.$on ? BASE : '#303030')};
  border-width: 1px 1px 0 0;
  background: ${(p) => (p.$on ? BASE : '#3b3b3b')};
  color: ${(p) => (p.$on ? '#eeeeee' : DIM)};
  white-space: nowrap;
`
const ShelfItems = styled.div`
  display: flex;
  padding: 4px 0 0 5px;
`
const ShelfItem = styled.button`
  display: flex;
  flex-direction: column;
  align-items: center;
  justify-content: space-between;
  width: 37px;
  height: 33px;
  flex-shrink: 0;
  font-size: 10px;
  line-height: 12px;
  font-weight: 700;
  color: #dddddd;
  span {
    border-radius: 2px;
    background: #2a2a2a;
  }
`
const ShelfSwatch = styled.button`
  width: 37px;
  height: 36px;
  border: 1px solid #f0f0f0;
  background: #bcbcbc;
`
const ShelfScript = styled.button`
  display: flex;
  align-items: center;
  justify-content: center;
  width: 35px;
  height: 34px;
  background: #22304a;
`

const shelfTabs = [
  'Curves / Surfaces', 'Poly Modeling', 'Sculpting', 'Rigging', 'Animation', 'Rendering', 'Custom', 'Exporter',
  'Curves', 'Deformation', 'Dynamics', 'Fluids', 'Fur', 'General', 'nCloth', 'nHair', 'PaintEffects', 'Surfaces',
  'AssetManager', 'MASH', 'Motion Graphics', 'XGen', 'TURTLE', 'Rigging_Custom', 'MyScripts', 'RollerGirl_Mirror',
  'Bullet', 'bakery',
]
const shelfItems = ['Parent', 'Orient', 'P_Aim', 'O_Aim', null, 'Bk_Phy', 'Rg_Phy']

const ShelfPanel = () => (
  <Shelf>
    <Handle />
    <ShelfGutter>
      <Icon name='bars' size={12} />
      <Icon name='gear' size={14} />
    </ShelfGutter>
    <ShelfBody>
      <ShelfTabs>
        {shelfTabs.map((t, i) => (
          <Tab key={i} $on={t === 'bakery'}>{t}</Tab>
        ))}
      </ShelfTabs>
      <ShelfItems>
        <ShelfScript aria-label='Shift keys'><Icon name='shiftKeys' size={26} /></ShelfScript>
        <ShelfSwatch aria-label='Script' />
        {shelfItems.map((t, i) =>
          t ? (
            <ShelfItem key={i}>
              <Icon name='python' size={18} />
              <span>{t}</span>
            </ShelfItem>
          ) : (
            <ShelfSwatch key={i} aria-label='Script' />
          )
        )}
      </ShelfItems>
    </ShelfBody>
  </Shelf>
)

const ToolGap = styled.span`
  width: ${(p) => p.$w}px;
  flex-shrink: 0;
`
const ToolLine = styled.span`
  width: 2px;
  height: 37px;
  margin: 0 5px;
  background: #8b8b8b;
`
const ToolBox = () => (
  <Bar $h={47} $line={2}>
    <Handle />
    {['select', 'lasso', 'paint', 'move', 'rotate', 'scale'].map((n) => (
      <IconButton key={n} $w={39} $h={38} $on={n === 'move'} aria-label={n}>
        <Icon name={n} size={29} />
      </IconButton>
    ))}
    <ToolGap $w={36} />
    <IconButton $w={39} $h={38} aria-label='axes'><Icon name='axes' size={29} /></IconButton>
    <ToolLine />
    {['single', 'four', 'two', 'outl'].map((n) => (
      <IconButton key={n} $w={39} $h={38} $on={n === 'outl'} aria-label={n}>
        <Icon name={n} size={33} />
      </IconButton>
    ))}
  </Bar>
)

/* ---------- outliner ---------- */

const Workbench = styled.main`
  display: flex;
  flex: 1;
  min-height: 0;
`
const OutlinerPanel = styled.section`
  display: flex;
  flex-direction: column;
  width: 278px;
  padding: 1px 4px 0 2px;
  flex-shrink: 0;
  border-right: 2px solid #393939;
`
const PanelTabs = styled.div`
  display: flex;
  height: ${(p) => p.$h || 18}px;
  flex-shrink: 0;
  background: ${MID};
`
const PanelTitle = styled.h2`
  margin: 0;
  width: 66px;
  padding-left: 8px;
  font-size: 12px;
  line-height: 20px;
  font-weight: 400;
  background: ${BASE};
  color: #eeeeee;
`
const TreeArea = styled.div`
  display: flex;
  flex: 1;
  min-height: 0;
  margin-top: 1px;
  background: ${MID};
`
const Tree = styled.ul`
  position: relative;
  flex: 1;
  min-width: 0;
`
const TreeRow = styled.li`
  display: flex;
  align-items: center;
  gap: 4px;
  height: 21px;
  padding-left: ${(p) => 22 + p.$level * 12}px;
  margin-right: 1px;
  white-space: nowrap;
  color: ${(p) => (p.$on ? '#ffffff' : p.$dim ? '#6e6e6e' : TEXT)};
  background: ${(p) => (p.$on ? BLUE : 'none')};
`
const Toggle = styled.button`
  display: block;
  width: 11px;
  height: 11px;
  flex-shrink: 0;
`
const TreeLines = styled.svg`
  position: absolute;
  left: 0;
  top: 0;
  pointer-events: none;
`

const treeRows = [
  { t: 'persp', icon: 'camera', dim: true },
  { t: 'top', icon: 'camera', dim: true },
  { t: 'front', icon: 'camera', dim: true },
  { t: 'side', icon: 'camera', dim: true },
  { t: 'head', icon: 'mesh' },
  { t: 'tail', icon: 'mesh' },
  { t: 'joint1', icon: 'joint', level: 0, box: '-' },
  { t: 'joint2', icon: 'joint', level: 1, box: '-' },
  { t: 'joint3', icon: 'joint', level: 2, box: '-' },
  { t: 'joint4', icon: 'joint', level: 3, box: '-' },
  { t: 'joint5', icon: 'joint', level: 4, box: '-' },
  { t: 'joint5_orientConstraint1', icon: 'chain', level: 5 },
  { t: 'joint4_orientConstraint1', icon: 'chain', level: 4 },
  { t: 'joint3_orientConstraint1', icon: 'chain', level: 3 },
  { t: 'joint2_orientConstraint1', icon: 'chain', level: 2 },
  { t: 'aim_ctrl_0', icon: 'star' },
  { t: 'aim_ctrl_1', icon: 'starSel', on: true },
  { t: 'aim_ctrl_2', icon: 'starSel', on: true },
  { t: 'aim_ctrl_3', icon: 'starSel', on: true },
  { t: 'aim_setup_0', icon: 'group', dim: true, box: '+' },
  { t: 'defaultLightSet', icon: 'set' },
  { t: 'defaultObjectSet', icon: 'set' },
]
const treeBranches = [[6, 7], [7, 8], [7, 14], [8, 9], [8, 13], [9, 10], [9, 12], [10, 11]]

const boxX = (i) => 27 + (treeRows[i].level || 0) * 12
const rowY = (i) => 10 + i * 21

const Outliner = () => (
  <OutlinerPanel>
    <PanelTabs><PanelTitle>Outliner</PanelTitle></PanelTabs>
    <MenuBar items={['Display', 'Show', 'Help']} $h={24} $x={8} />
    <Search $top={4} $pad='0 2px 0 5px' />
    <TreeArea>
      <Tree>
        {treeRows.map((r) => (
          <TreeRow key={r.t} $level={r.level || 0} $dim={r.dim} $on={r.on}>
            <Toggle as={r.box ? 'button' : 'span'} aria-label={r.box ? `Toggle ${r.t}` : undefined}>
              {r.box && (
                <svg width='11' height='11' viewBox='0 0 11 11'>
                  <path d='M1 1h9v9H1zM3 5.500h5' {...stroke('#a8a8a8', 1)} />
                  {r.box === '+' && <path d='M5.500 3v5' {...stroke('#a8a8a8', 1)} />}
                </svg>
              )}
            </Toggle>
            <Icon name={r.icon} size={16} />
            {r.t}
          </TreeRow>
        ))}
        <TreeLines width='120' height='330'>
          {treeBranches.map(([a, b]) => {
            const leaf = !treeRows[b].box
            return (
              <g key={`${a}-${b}`}>
                <path
                  d={`M${boxX(a) + 0.5} ${rowY(a) + 6}V${rowY(b) + 0.5}H${boxX(b) - (leaf ? 0 : 5)}`}
                  {...stroke('#9a9a9a', 1)}
                />
                {leaf && <circle cx={boxX(b)} cy={rowY(b) + 0.5} r='3' fill='#9a9a9a' />}
              </g>
            )
          })}
        </TreeLines>
      </Tree>
      <VScroll>
        <Tri dir='up' />
        <Thumb />
        <Tri />
      </VScroll>
    </TreeArea>
    <HScroll>
      <Tri dir='left' />
      <Thumb $flex={22} />
      <Tri dir='right' />
      <Rest $flex={1} />
    </HScroll>
    <Dots $w={90} />
    <Rest $flex='0 0 6px' />
  </OutlinerPanel>
)

/* ---------- channel box ---------- */

const ChannelPanel = styled.section`
  display: flex;
  width: 293px;
  flex-shrink: 0;
`
const ChannelBody = styled.div`
  display: flex;
  flex-direction: column;
  flex: 1;
  padding: 0 5px 0 4px;
  min-width: 0;
`
const ChannelIcons = styled.div`
  display: flex;
  justify-content: flex-end;
  height: 24px;
  padding-right: 2px;
  flex-shrink: 0;
`
const NodeName = styled.div`
  height: 16px;
  padding-left: 1px;
  font-weight: 600;
  flex-shrink: 0;
`
const ChannelTable = styled.table`
  border-collapse: collapse;
  width: 100%;
  th {
    padding: 0 7px 0 0;
    font-weight: 400;
    text-align: right;
    line-height: 17px;
  }
  td {
    width: 78px;
    padding: 0 0 1px;
  }
`
const ChannelValue = styled.input`
  display: block;
  width: 78px;
  height: 16px;
  padding-left: ${(p) => (p.$keyed ? 3 : 11)}px;
  border-left: ${(p) => (p.$keyed ? '8px solid #dd7080' : '0')};
  background: ${DARK};
`
const ShapeRow = styled.div`
  height: 16px;
  padding-left: 10px;
  margin-bottom: 18px;
  font-weight: 600;
  background: #3b3b3b;
  flex-shrink: 0;
`
const DarkBox = styled.div`
  flex: 1;
  min-height: 0;
  background: ${DARK};
`
const LayerPanel = styled.div`
  display: flex;
  flex-direction: column;
  height: 319px;
  margin: 8px 0 6px;
  border: 1px solid #383838;
  flex-shrink: 0;
`
const LayerIcons = styled.div`
  display: flex;
  justify-content: flex-end;
  gap: 2px;
  height: 25px;
  padding-right: 5px;
`
const LayerList = styled.div`
  display: flex;
  flex-direction: column;
  flex: 1;
  margin: 0 3px 3px;
  background: ${MID};
`
const SideStrip = styled.div`
  width: 17px;
  background: #3b3b3b;
`
const SideTab = styled.button`
  writing-mode: vertical-rl;
  width: 17px;
  height: 165px;
  padding: 12px 3px 0 0;
  text-align: left;
  white-space: nowrap;
  background: ${BASE};
  color: #e4e4e4;
`

const channels = [
  ['Translate X', '2.045', true],
  ['Translate Y', '8.087', true],
  ['Translate Z', '5.738', true],
  ['Rotate X', '-283.125', true],
  ['Rotate Y', '38.341', true],
  ['Rotate Z', '52.64', true],
  ['Scale X', '1'],
  ['Scale Y', '1'],
  ['Scale Z', '1'],
  ['Visibility', 'on'],
]

const ChannelBox = () => (
  <ChannelPanel>
    <ChannelBody>
      <ChannelIcons>
        {['manip', 'speed', 'graphArrow'].map((n) => (
          <IconButton key={n} $w={22} aria-label={n}><Icon name={n} size={15} /></IconButton>
        ))}
      </ChannelIcons>
      <MenuBar items={['Channels', 'Edit', 'Object', 'Show']} $h={24} $x={7} />
      <NodeName>aim_ctrl_3 . . .</NodeName>
      <ChannelTable>
        <tbody>
          {channels.map(([name, value, keyed]) => (
            <tr key={name}>
              <th scope='row'>{name}</th>
              <td><ChannelValue aria-label={name} defaultValue={value} $keyed={keyed} /></td>
            </tr>
          ))}
        </tbody>
      </ChannelTable>
      <NodeName>SHAPES</NodeName>
      <ShapeRow>aim_ctrl_3Shape</ShapeRow>
      <DarkBox />
      <Dots $w={90} />
      <LayerPanel>
        <PanelTabs $h={18}>
          <Tab $on>Display</Tab>
          <Tab>Anim</Tab>
        </PanelTabs>
        <MenuBar items={['Layers', 'Options', 'Help']} $h={24} $x={9} />
        <LayerIcons>
          {['layUp', 'layDown', 'layNew', 'layObj'].map((n) => (
            <IconButton key={n} $h={20} aria-label={n}><Icon name={n} size={15} /></IconButton>
          ))}
        </LayerIcons>
        <LayerList>
          <DarkBox />
          <HScroll>
            <Tri dir='left' />
            <Thumb $flex={162} />
            <Rest $flex={70} />
            <Tri dir='right' />
          </HScroll>
        </LayerList>
      </LayerPanel>
    </ChannelBody>
    <SideStrip>
      <SideTab>Channel Box / Layer Editor</SideTab>
    </SideStrip>
  </ChannelPanel>
)

/* ---------- viewport ---------- */

const ViewportPanel = styled.section`
  display: flex;
  flex-direction: column;
  flex: 1;
  min-width: 0;
  margin: 3px 3px 5px 4px;
  border: 1px solid #8a8a8a;
`
const PanelToolbar = styled.div`
  display: flex;
  align-items: center;
  height: 20px;
  flex-shrink: 0;
`
const Canvas = styled.div`
  position: relative;
  flex: 1;
  min-height: 0;
  background: #5d5d5d;
  overflow: hidden;
  svg {
    width: 100%;
    height: 100%;
  }
`
const rowsY = [876, 884, 892, 901, 909, 919, 928, 939, 949, 961, 973, 985, 998, 1012, 1027, 1042, 1058, 1076]
const leftX = (y) => 374 - ((y - 876) * 244) / 201
const rightX = (y) => 1155 + ((y - 878) * 184) / 199

const Scene = () => (
  <svg viewBox='0 0 1599 1077' preserveAspectRatio='xMidYMax slice'>
    <defs>
      <linearGradient id='flame' x1='.2' y1='0' x2='.8' y2='1'>
        <stop offset='0' stopColor='#f26000' />
        <stop offset='.4' stopColor='#cf4a00' />
        <stop offset='.75' stopColor='#993a00' />
        <stop offset='1' stopColor='#7a3400' />
      </linearGradient>
      <linearGradient id='flameEdge' x1='.4' y1='.6' x2='1' y2='.35'>
        <stop offset='.5' stopColor='#3a1600' stopOpacity='0' />
        <stop offset='1' stopColor='#200c00' stopOpacity='.9' />
      </linearGradient>
      <radialGradient id='ball'>
        <stop offset='0' stopColor='#620000' />
        <stop offset='.75' stopColor='#560000' />
        <stop offset='1' stopColor='#2c0000' />
      </radialGradient>
    </defs>
    <g strokeWidth='1'>
      {rowsY.map((y, i) => (
        <line key={y} x1={leftX(y)} y1={y} x2={rightX(y + 3)} y2={y + 3} stroke={i === 12 ? '#333' : '#494949'} />
      ))}
      {Array.from({ length: 25 }, (_, i) => (
        <line
          key={i}
          x1={374 + i * 32.54}
          y1={876 + i / 12}
          x2={130 + i * 50.37}
          y2='1077'
          stroke={i === 12 ? '#333' : '#494949'}
        />
      ))}
    </g>
    <g transform='translate(524 538) scale(.3333)'>
      <circle cx='506' cy='526' r='128' fill='url(#ball)' stroke='#150000' strokeWidth='3' />
      {['url(#flame)', 'url(#flameEdge)'].map((f) => (
        <path
          key={f}
          d='M341 123C300 145 262 205 235 240 200 285 195 330 200 375c3 55 25 90 50 112 40 28 90 53 135 56 20-23 33-73 37-123 2-40-17-90-52-115-25-20-60-33-73-43-7-10 5-47 33-97 8-15 10-30 11-42z'
          fill={f}
          stroke='#401800'
          strokeWidth='2'
        />
      ))}
    </g>
    <path d='M27 1035v14' stroke='#2fc42f' />
    <path d='M27 1042v8' stroke='#c03030' />
    <path d='M10 1050h17' stroke='#2a2ad0' />
    <text x='24' y='1033' fontSize='11' fill='#2fc42f'>y</text>
    <text x='8' y='1049' fontSize='10' fill='#2a2ad0'>z</text>
    <g fill='#f2f2f2' fontSize='11' fontWeight='700'>
      <text x='791' y='1068' textAnchor='middle'>persp</text>
      <text x='1384' y='1068'>Frame:</text>
      <text x='1504' y='1068'>40</text>
    </g>
  </svg>
)

const viewTools = [
  ['camera', 'camLock', 'camSet', 'bookmark', 'imgPlane', 'panZoom', 'grease'],
  ['grid', 'filmGate', 'resGate', 'mask', 'fieldChart', 'safeAct', 'safeTitle'],
  ['wire', 'shaded', 'halfball', 'wireShade', 'checker', 'bulb', 'shadow'],
  ['ao', 'mblur', 'msaa', 'dof'],
  ['isolate'],
  ['copyA', 'copyB', 'diag'],
]
const viewActive = ['grid', 'shaded', 'checker', 'diag']

const Viewport = () => (
  <ViewportPanel>
    <MenuBar items={['View', 'Shading', 'Lighting', 'Show', 'Renderer', 'Panels']} $h={20} $x={9} />
    <PanelToolbar>
      {viewTools.map((group) => (
        <React.Fragment key={group[0]}>
          <Sep $w={12} />
          {group.map((n) => (
            <IconButton key={n} $w={20} $h={19} $on={viewActive.includes(n)} aria-label={n}>
              <Icon name={n} size={15} />
            </IconButton>
          ))}
        </React.Fragment>
      ))}
      <Sep $w={12} />
      <IconButton $w={20} aria-label='exposure'><Icon name='aperture' size={15} /></IconButton>
      <Field $w={38} $h={16} aria-label='Exposure' defaultValue='0.00' />
      <IconButton $w={24} aria-label='gamma'><Icon name='gammaIc' size={14} /></IconButton>
      <Field $w={40} $h={16} aria-label='Gamma' defaultValue='1.00' />
      <IconButton $w={24} $h={19} $on aria-label='color management'><Icon name='on' size={17} /></IconButton>
      <Select label='View transform' value='sRGB gamma' w={173} h={18} />
    </PanelToolbar>
    <Canvas><Scene /></Canvas>
  </ViewportPanel>
)

/* ---------- attribute editor ---------- */

const AttrPanel = styled.section`
  display: flex;
  flex-direction: column;
  width: 381px;
  flex-shrink: 0;
  overflow: hidden;
  border-left: 2px solid #393939;
  padding-left: 4px;
`
const AttrTabs = styled.div`
  display: flex;
  height: 19px;
  margin: 13px 0 0 6px;
  flex-shrink: 0;
  background: ${MID};
`
const NodeRow = styled.div`
  display: flex;
  align-items: center;
  height: 86px;
  flex-shrink: 0;
  label {
    display: flex;
    align-items: center;
    justify-content: flex-end;
    gap: 6px;
    width: 324px;
    flex-shrink: 0;
  }
`
const IoButtons = styled.div`
  display: flex;
  flex-direction: column;
  margin: 0 9px 0 10px;
`
const SideButtons = styled.div`
  display: flex;
  flex-direction: column;
  gap: 2px;
  button {
    width: 40px;
    height: 21px;
    padding-left: 4px;
    text-align: left;
    text-decoration: underline;
    background: ${LIGHT};
  }
`
const Sections = styled.div`
  display: flex;
  flex-direction: column;
  gap: 2px;
  margin: 8px 0 0 10px;
  flex: 1;
`
const SectionHead = styled.button`
  display: flex;
  align-items: center;
  gap: 14px;
  height: 21px;
  padding-left: 9px;
  flex-shrink: 0;
  font-weight: 600;
  background: ${LIGHT};
  color: #bdbdbd;
`
const AttrRow = styled.div`
  display: flex;
  align-items: center;
  gap: 5px;
  height: 23px;
  flex-shrink: 0;
`
const AttrRows = styled.div`
  margin-bottom: -2px;
`
const AttrName = styled.span`
  width: 151px;
  margin-right: 4px;
  flex-shrink: 0;
  text-align: right;
  color: #b4b4b4;
`
const AttrValue = styled.input`
  width: 71px;
  height: 18px;
  padding-left: 5px;
  flex-shrink: 0;
  border-radius: 2px;
  background: ${(p) => (p.$keyed ? '#cd2929' : DARK)};
  color: ${(p) => (p.$keyed ? '#f3b5b5' : TEXT)};
`
const Check = styled.input`
  appearance: none;
  width: 13px;
  height: 13px;
  background: ${DARK};
  &:checked::before {
    content: '';
    display: block;
    width: 4px;
    height: 8px;
    margin: 0 0 0 5px;
    border: solid #ffffff;
    border-width: 0 2px 2px 0;
    transform: rotate(40deg);
  }
`
const CheckLabel = styled.label`
  display: flex;
  align-items: center;
  gap: 5px;
  white-space: nowrap;
`
const Notes = styled.div`
  display: flex;
  flex-direction: column;
  flex-shrink: 0;
  label {
    padding-left: 12px;
    line-height: 16px;
  }
  textarea {
    height: 143px;
    margin-left: 2px;
    background: ${DARK};
    resize: none;
  }
`
const FootButtons = styled.div`
  display: flex;
  gap: 2px;
  padding: 5px 0 6px;
  flex-shrink: 0;
`
const FlatButton = styled.button`
  width: ${(p) => p.$w}px;
  height: ${(p) => p.$h || 28}px;
  flex-shrink: 0;
  background: ${LIGHT};
  color: #e0e0e0;
`

const attrs = [
  ['Translate', ['-1.351', '1.245', '8.528'], true],
  ['Rotate', ['58.714', '0.000', '27.509'], true],
  ['Scale', ['1.000', '1.000', '1.000']],
  ['Shear', ['0.000', '0.000', '0.000']],
  ['Rotate Order', null],
  ['Rotate Axis', ['0.000', '0.000', '0.000']],
]

const AttributeEditor = () => (
  <AttrPanel>
    <MenuBar items={['List', 'Selected', 'Focus', 'Attributes', 'Show', 'Help']} $h={30} $x={6} />
    <AttrTabs>
      <Tab $on>aim_ctrl_3</Tab>
      <Tab>aim_ctrl_3Shape</Tab>
      <Tab>joint5_loc_3_spin_parentConstraint1</Tab>
    </AttrTabs>
    <NodeRow>
      <label>
        transform:
        <Field $w={161} $h={23} defaultValue='aim_ctrl_3' />
      </label>
      <IoButtons>
        <IconButton aria-label='Go to input'><Icon name='ioIn' size={17} /></IconButton>
        <IconButton aria-label='Go to output'><Icon name='ioOut' size={17} /></IconButton>
      </IoButtons>
      <SideButtons>
        <button aria-label='Focus' />
        <button aria-label='Presets' />
        <button>Show</button>
      </SideButtons>
    </NodeRow>
    <Sections>
      <SectionHead>
        <Tri size={12} color='#eee' />
        Transform Attributes
      </SectionHead>
      <AttrRows>
        {attrs.map(([name, values, keyed]) => (
          <AttrRow key={name}>
            <AttrName>{name}</AttrName>
            {values ? (
              values.map((v, i) => <AttrValue key={i} aria-label={`${name} ${i + 1}`} defaultValue={v} $keyed={keyed} />)
            ) : (
              <Select label={name} value='xyz' w={63} h={19} />
            )}
          </AttrRow>
        ))}
        <AttrRow>
          <AttrName />
          <CheckLabel>
            <Check type='checkbox' defaultChecked />
            Inherits Transform
          </CheckLabel>
        </AttrRow>
      </AttrRows>
      {['Pivots', 'Limit Information', 'Display', 'Node Behavior', 'UUID', 'Extra Attributes'].map((t) => (
        <SectionHead key={t}>
          <Tri dir='right' size={12} color='#eee' />
          {t}
        </SectionHead>
      ))}
    </Sections>
    <Dots $w={160} />
    <Notes>
      <label htmlFor='notes'>Notes:&nbsp; aim_ctrl_3</label>
      <textarea id='notes' />
    </Notes>
    <FootButtons>
      <FlatButton $w={157}>Select</FlatButton>
      <FlatButton $w={163}>Load Attributes</FlatButton>
      <FlatButton $w={157} aria-label='Copy Tab' />
    </FootButtons>
  </AttrPanel>
)

/* ---------- floating windows ---------- */

const FloatWindow = styled.section`
  position: absolute;
  left: ${(p) => p.$x}px;
  top: ${(p) => p.$y}px;
  width: ${(p) => p.$w}px;
  height: ${(p) => p.$h}px;
  display: flex;
  flex-direction: column;
  border: 1px solid #555555;
  border-top: 0;
  background: ${BASE};
  box-shadow: 0 3px 14px rgba(0, 0, 0, 0.45);
`
const TitleBar = styled.header`
  display: flex;
  align-items: center;
  height: 33px;
  margin: 0 -1px;
  padding: 0 1px 0 ${(p) => (p.$plain ? 2 : 9)}px;
  flex-shrink: 0;
  background: #ffffff;
  border-bottom: 1px solid #1c1c1c;
  color: #9a9a9a;
  h3 {
    flex: 1;
    margin: 0;
    padding-left: 6px;
    font-size: 12px;
    font-weight: 400;
  }
`
const WinButton = styled.button`
  display: flex;
  align-items: center;
  justify-content: center;
  width: 48px;
  height: 31px;
`
const Logo = () => (
  <svg width='16' height='16' viewBox='0 0 16 16' aria-hidden='true'>
    <rect width='16' height='16' fill='#cfeeee' />
    <text x='8' y='11' textAnchor='middle' fontSize='13' fontWeight='800' fill='#13868a'>M</text>
    <path d='M5 14h7' stroke='#58a9ab' strokeDasharray='2 1' />
  </svg>
)
const WinIcon = ({ d, color = '#6a6a6a' }) => (
  <svg width='12' height='12' viewBox='0 0 12 12'>
    <path d={d} {...stroke(color, 1)} />
  </svg>
)
const WindowTitle = ({ title, noMax }) => (
  <TitleBar>
    <Logo />
    <h3>{title}</h3>
    <WinButton aria-label='Minimize'><WinIcon d='M1 6.500h10' /></WinButton>
    <WinButton aria-label='Maximize'><WinIcon d='M1.500 1.500h9v9h-9z' color={noMax ? '#eeeeee' : '#6a6a6a'} /></WinButton>
    <WinButton aria-label='Close'><WinIcon d='M1 1l10 10M11 1L1 11' /></WinButton>
  </TitleBar>
)
const Range = styled.input`
  appearance: none;
  width: 100%;
  height: 16px;
  background: linear-gradient(${DARK}, ${DARK}) center / 100% 4px no-repeat;
  &::-webkit-slider-thumb {
    appearance: none;
    width: 8px;
    height: 14px;
    border-radius: 2px;
    background: #bfbfbf;
  }
`
const OffsetBody = styled.div`
  display: flex;
  flex-direction: column;
  padding: 20px 25px 0 20px;
`
const OffsetRow = styled.div`
  display: flex;
  align-items: center;
  height: 25px;
  margin: 5px 0 17px;
`
const Spin = styled.span`
  display: flex;
  width: 64px;
  height: 23px;
  border: 1px solid #525252;
  border-radius: 2px;
  background: ${DARK};
  input {
    flex: 1;
    padding-left: 5px;
  }
`
const SpinButtons = styled.span`
  display: flex;
  flex-direction: column;
  gap: 1px;
  width: 16px;
  button {
    flex: 1;
    display: flex;
    align-items: center;
    justify-content: center;
    background: ${LIGHT};
  }
`
const SpinBox = ({ label, value }) => (
  <Spin>
    <input aria-label={label} defaultValue={value} />
    <SpinButtons>
      <button aria-label={`${label} up`}><Tri dir='up' size={8} color='#eee' /></button>
      <button aria-label={`${label} down`}><Tri size={8} color='#eee' /></button>
    </SpinButtons>
  </Spin>
)
const OffsetLabel = styled.label`
  line-height: 18px;
  margin-bottom: 16px;
`

const KeyframeOffset = () => (
  <FloatWindow $x={779} $y={288} $w={331} $h={190}>
    <WindowTitle title='Keyframe Offset' noMax />
    <OffsetBody>
      Timeline
      <OffsetRow>
        <FlatButton $w={42} $h={25}>In</FlatButton>
        <ToolGap $w={12} />
        <SpinBox label='In offset' value='-200.0' />
        <Rest />
        <SpinBox label='Out offset' value='200.00' />
        <ToolGap $w={9} />
        <FlatButton $w={42} $h={25}>Out</FlatButton>
      </OffsetRow>
      <OffsetLabel htmlFor='offset'>Offset</OffsetLabel>
      <Range id='offset' type='range' defaultValue={51} />
    </OffsetBody>
  </FloatWindow>
)

const Cursor = styled.svg`
  position: absolute;
  left: 1014px;
  top: 447px;
`

const JointBody = styled.div`
  display: grid;
  grid-template-columns: 94px 94px;
  align-items: center;
`
const GhostClose = styled.span`
  width: 20px;
  height: 20px;
  background: #e6e6e6;
`
const JointCheck = styled(CheckLabel)`
  height: 36px;
`
const JointDisplay = () => (
  <FloatWindow $x={2077} $y={333} $w={211} $h={179}>
    <TitleBar $plain>
      <h3>Joint Display</h3>
      <GhostClose />
    </TitleBar>
    <JointBody>
      <Field $w={92} $h={32} aria-label='Joint size' defaultValue='0.60' />
      <Range type='range' aria-label='Joint size slider' defaultValue={7} />
      {['Min', 'Max', 'Multiply', 'Divide'].map((t) => (
        <FlatButton key={t} $w={94} $h={34}>{t}</FlatButton>
      ))}
      <Rest />
      <JointCheck>
        <Check type='checkbox' />
        Joint Visibility
      </JointCheck>
    </JointBody>
  </FloatWindow>
)

/* ---------- graph editor ---------- */

const GraphTools = styled.div`
  display: flex;
  align-items: center;
  height: 27px;
  padding-left: 4px;
  flex-shrink: 0;
`
const ThinSep = styled.span`
  width: 4px;
  height: 22px;
  flex-shrink: 0;
  background: linear-gradient(#333333, #333333) center / 1px 100% no-repeat;
`
const StatsLabel = styled.span`
  width: 36px;
`
const GraphBody = styled.div`
  display: flex;
  flex: 1;
  min-height: 0;
  padding: 0 3px 3px 4px;
`
const GraphSide = styled.div`
  display: flex;
  flex-direction: column;
  width: 216px;
  padding-top: 7px;
`
const GraphTree = styled.div`
  display: flex;
  flex: 1;
  min-height: 0;
  margin-top: 11px;
  overflow: hidden;
  background: ${MID};
  ul {
    flex: 1;
  }
`
const GraphNode = styled.li`
  display: flex;
  align-items: center;
  gap: 5px;
  height: 21px;
  padding-left: 5px;
  margin-right: 2px;
  background: ${BLUE};
  color: #ffffff;
`
const GraphChannel = styled.li`
  display: flex;
  align-items: center;
  gap: 38px;
  height: 21px;
  padding-left: 34px;
  font-size: 11px;
  font-style: italic;
  color: ${(p) => p.$color};
`
const Splitter = styled.span`
  width: 7px;
  align-self: center;
  height: 98px;
  background: radial-gradient(#8a8a8a 1px, transparent 1px) 0 0 / 3px 3px repeat-y;
`
const GraphView = styled.svg`
  flex: 1;
  min-width: 0;
  background: #373737;
`

const RED = '#c04a58'
const GREEN = '#47a052'
const BLUEC = '#6d8ec9'
const channelColors = [
  ['Translate X', RED], ['Translate Y', GREEN], ['Translate Z', BLUEC],
  ['Rotate X', RED], ['Rotate Y', GREEN], ['Rotate Z', BLUEC],
]

// anim curves as [frame, value] keys
const curves = [
  { c: BLUEC, k: [[2.5, 150], [5.5, 137], [8.5, 113], [11.5, 90], [14.5, 68], [17.5, 56], [22.4, 46], [25.6, 51], [28.7, 63], [31.6, 82], [34.6, 112], [37.6, 141], [39.6, 155], [41.7, 160], [44.7, 155], [47.6, 149]] },
  { c: BLUEC, k: [[4, 29], [7.8, 25], [13, 14], [16, 12], [18, 35], [21, 89], [23, 118], [25, 143], [28, 171], [31, 190], [33, 194], [35.3, 197], [36.7, 193], [37.6, 183], [38.7, 157], [39.6, 122], [40.7, 94], [42, 73], [44.4, 50], [46.3, 38], [49, 31], [50.7, 29]] },
  { c: BLUEC, k: [[5, 26], [9, 18], [14, 8], [17, 12], [19.5, 40], [21.6, 80], [23.6, 108], [26.6, 141], [29.6, 168], [31.7, 185], [34, 194], [35.6, 190], [37, 162], [38, 124], [39.1, 93], [40.4, 79], [43.4, 59], [46.3, 36], [50.7, 22]] },
  { c: GREEN, k: [[2.5, 3], [5.3, 22], [7.3, 33], [10, 40], [12.6, 47], [15.5, 52], [20, 51], [22.7, 45], [25.8, 33], [28.1, 14], [29.7, 3], [31.6, -21], [33.6, -35], [35.6, -42], [38.7, -42], [40.7, -33], [43.4, -16], [46.3, -2], [50.7, 0]] },
  { c: GREEN, k: [[2.5, 4], [4, 8], [5, -11], [7, -22], [10, -36], [13, -53], [16, -60], [18.5, -65], [21.5, -64], [24.1, -58], [26.1, -46], [28.6, -27], [30.6, -11], [31.7, 6], [33.1, 31], [34.6, 54], [36, 70], [38.1, 77], [39.5, 70], [41.4, 50], [44.4, 21], [46.3, 12], [50.7, 7]] },
  { c: GREEN, k: [[5.5, -8], [8, -22], [11, -38], [14, -52], [17, -60], [19.5, -66], [22.5, -62], [25.1, -53], [27.5, -38], [29.6, -22], [31.6, -8], [33, 14], [34.5, 38], [36.2, 60], [37.8, 72], [39.8, 76], [41.5, 60], [43.4, 40], [45.4, 20], [47, 12], [50.7, 4]] },
  { c: RED, k: [[2.5, 65], [4.4, 54], [7.3, 45], [10, 38], [13, 24], [15.6, -8], [17.5, -27], [19.6, -44], [22.1, -67], [24.1, -86], [26.7, -102], [28.7, -111], [30.6, -133], [32.7, -154], [34.6, -179], [36.7, -212], [38.7, -235], [40.7, -268], [42.7, -280], [46.3, -294], [50.7, -300]] },
  { c: RED, k: [[3.5, 58], [5.5, 50], [7.8, 46], [11.5, 41], [14.6, 25], [17, 3], [19.1, -21], [21.1, -53], [23, -81], [26, -100], [29.1, -114], [31.6, -121], [34.1, -131], [35.1, -137], [36.2, -151], [37.1, -179], [38.1, -217], [39.1, -245], [40.1, -264], [41.7, -278], [44.4, -290], [46.3, -295], [50.7, -300]] },
  { c: RED, k: [[5.5, 60], [9, 50], [12.5, 38], [16, 20], [18.5, -7], [20.6, -35], [22.6, -63], [25.1, -86], [29.6, -109], [32.7, -119], [35.6, -130], [36.7, -140], [37.6, -154], [38.7, -179], [39.6, -219], [40.7, -250], [41.7, -268], [43.6, -282], [46.3, -294], [49, -299]] },
  { c: GREEN, k: [[6, 12], [18, 11], [29, 5], [40, 10], [51, 9]] },
  { c: RED, k: [[2.5, 3], [20, 6], [35, 5], [51, 4]] },
  { c: GREEN, k: [[2.5, -1], [20, 1], [35, 1], [51, 1]] },
  { c: RED, k: [[2.5, -5], [20, -4], [35, -5], [51, -2]] },
  { c: BLUEC, k: [[3, 1], [20, -6], [31, -9], [38, 0], [51, 3]] },
]
const gx = (f) => 53 + (f - 1) * 11.78
const gy = (v) => 140 - v * 0.357
const sample = (keys, f) => {
  const i = Math.max(1, keys.findIndex(([kf]) => kf >= f))
  const p1 = keys[i - 1]
  const p2 = keys[i]
  const p0 = keys[i - 2] || p1
  const p3 = keys[i + 1] || p2
  const t = (f - p1[0]) / (p2[0] - p1[0])
  const m1 = ((p2[1] - p0[1]) / (p2[0] - p0[0])) * (p2[0] - p1[0])
  const m2 = ((p3[1] - p1[1]) / (p3[0] - p1[0])) * (p2[0] - p1[0])
  return (
    (2 * t ** 3 - 3 * t ** 2 + 1) * p1[1] + (t ** 3 - 2 * t ** 2 + t) * m1 +
    (3 * t ** 2 - 2 * t ** 3) * p2[1] + (t ** 3 - t ** 2) * m2
  )
}
const points = (keys) => {
  const out = []
  for (let f = keys[0][0]; f <= keys[keys.length - 1][0]; f += 1) out.push([gx(f), gy(sample(keys, f))])
  return out
}

const Graph = () => (
  <GraphView viewBox='0 0 637 292' preserveAspectRatio='none'>
    {[300, 200, 100, 0, -100, -200, -300, -400].map((v) => (
      <line key={v} x1='0' x2='637' y1={gy(v) + 0.5} y2={gy(v) + 0.5} stroke={v ? '#4c4c4c' : '#8c8c8c'} />
    ))}
    <path d='M41.500 26v266M324.500 26v266' stroke='#505050' />
    {curves.map(({ c, k }, i) => {
      const pts = points(k)
      return (
        <g key={i}>
          <polyline points={pts.map((p) => p.join(',')).join(' ')} {...stroke(c, 1)} />
          {pts.map(([x, y]) => (
            <rect key={x} x={x - 1.5} y={y - 2} width='3' height='4' fill='#eda53a' />
          ))}
        </g>
      )
    })}
    <path d='M0 26h53v266H0zM585 26h52v266h-52z' fill='#1d1d1d' opacity='.6' />
    {[200, 100, 0, -100, -200, -300, -400].map((v) => (
      <text key={v} x='44' y={gy(v) - 5} textAnchor='end' fontSize='11' fill='#686868'>{v}</text>
    ))}
    <path d='M0 0h637v26H0z' fill='#2e2e2e' />
    {Array.from({ length: 54 }, (_, i) => (
      <line
        key={i}
        x1={gx(i - 3)}
        x2={gx(i - 3)}
        y1={(i - 3) % 5 === 0 ? 1 : 18}
        y2='26'
        stroke={(i - 3) % 5 === 0 ? '#7a7a7a' : '#4e4e4e'}
      />
    ))}
    {[5, 10, 15, 20, 25, 30, 35, 40, 45, 50].map((f) => (
      <text key={f} x={gx(f) + 2} y='11' fontSize='11' fill='#8c8c8c'>{f}</text>
    ))}
    <path d='M41 0h11v26l-11-12zM585 0h17v14h-8l-9 12z' fill='#050505' />
    <g fontSize='11' fontWeight='700' fill='#f0f0f0'>
      <text x='43' y='11'>1</text>
      <text x='586' y='11'>46</text>
    </g>
  </GraphView>
)

const graphTools = [
  ['gFrame', 'gPlay', 'gCenter'],
  ['tAuto', 'tSpline', 'tClamp', 'tLinear', 'tFlat', 'tStep', 'tPlat'],
  ['buffer', 'bufferUp'],
  ['brk', 'unify', 'free', 'pnlA', 'pnlB', 'pnlC'],
]

const GraphNodeRow = ({ name }) => (
  <GraphNode>
    <svg width='26' height='11' viewBox='0 0 26 11'>
      <circle cx='5' cy='5.500' r='4' {...stroke('#7da6bf', 1)} />
      <path d='M3 5.500h4M16.500 1.500h8v8h-8zM18 5.500h5M20.500 3v5' {...stroke('#7da6bf', 1)} />
    </svg>
    <Icon name='starSel' size={15} />
    {name}
  </GraphNode>
)

const GraphEditor = () => (
  <FloatWindow $x={1153} $y={230} $w={869} $h={380}>
    <WindowTitle title='Graph Editor' />
    <MenuBar
      items={['Edit', 'View', 'Select', 'Curves', 'Keys', 'Tangents', 'List', 'Show', 'Help']}
      $h={24}
      $x={11}
      $gap={14}
    />
    <GraphTools>
      {['gMove', 'gInsert', 'gLattice', 'gRegion', 'gRetime'].map((n) => (
        <IconButton key={n} $w={26} aria-label={n}><Icon name={n} size={18} /></IconButton>
      ))}
      <ThinSep />
      <StatsLabel>Stats</StatsLabel>
      <ToolGap $w={4} />
      <Field $w={93} $h={19} aria-label='Stats frame' />
      <ToolGap $w={6} />
      <Field $w={98} $h={19} aria-label='Stats value' />
      <ToolGap $w={6} />
      {graphTools.map((group) => (
        <React.Fragment key={group[0]}>
          <ThinSep />
          {group.map((n) => (
            <IconButton key={n} $w={26} aria-label={n}><Icon name={n} size={18} /></IconButton>
          ))}
        </React.Fragment>
      ))}
    </GraphTools>
    <GraphBody>
      <GraphSide>
        <Search $pad='0 2px 0 4px' />
        <GraphTree>
          <ul>
            <GraphNodeRow name='aim_ctrl_1' />
            {channelColors.map(([t, c]) => (
              <GraphChannel key={t} $color={c}><Icon name='plug' size={14} />{t}</GraphChannel>
            ))}
            <GraphNodeRow name='aim_ctrl_2' />
            {channelColors.slice(0, 3).map(([t, c]) => (
              <GraphChannel key={t} $color={c}><Icon name='plug' size={14} />{t}</GraphChannel>
            ))}
          </ul>
          <VScroll>
            <Tri dir='up' />
            <Thumb $flex={108} />
            <Rest $flex={96} />
            <Tri />
          </VScroll>
        </GraphTree>
        <HScroll>
          <Tri dir='left' />
          <Thumb $flex={12} />
          <Tri dir='right' />
          <Rest />
        </HScroll>
        <Dots $w={72} />
        <Rest $flex='0 0 4px' />
      </GraphSide>
      <Splitter />
      <Graph />
    </GraphBody>
  </FloatWindow>
)

/* ---------- bottom bars ---------- */

const TimeTrack = styled.ol`
  display: grid;
  grid-template-columns: repeat(46, 1fr);
  flex: 1;
  height: 30px;
  margin: 0;
  padding: 0 12px 0 9px;
  list-style: none;
  background: ${DARK};
`
const Frame = styled.li`
  padding-left: 9px;
  line-height: 14px;
  color: #7c7c7c;
  border: solid transparent;
  border-width: 0 0 0 2px;
  border-image: linear-gradient(#a82226 48%, #d06a6a 48%) 1;
  background: ${(p) => (p.$on ? LIGHT : 'none')};
  b {
    display: block;
    color: #ffffff;
    font-weight: 600;
  }
`
const CurrentTime = styled.input`
  width: 92px;
  height: 20px;
  margin: 4px 8px 0 8px;
  padding-left: 6px;
  color: #6a6a6a;
  background: #424242;
`
const Transport = styled.div`
  display: flex;
  width: 76px;
  overflow: hidden;
`
const RangeTrack = styled.div`
  flex: 1;
  height: 26px;
  margin: 0 8px;
  padding: 1px 8px;
  border-radius: 2px;
  background: ${MID};
`
const RangeBar = styled.div`
  display: flex;
  align-items: center;
  gap: 6px;
  height: 22px;
  width: 414px;
  padding: 0 4px;
  border-radius: 3px;
  background: ${LIGHT};
  i {
    width: 16px;
    height: 16px;
    border-radius: 4px;
    background: #939393;
  }
`
const MelLabel = styled.label`
  display: flex;
  align-items: center;
  flex: 0 0 990px;
  gap: 14px;
  padding-left: 10px;
  color: #e4e4e4;
  input {
    flex: 1;
    height: 23px;
    border-radius: 2px;
    background: ${DARK};
  }
`
const MelResult = styled.input`
  flex: 1;
  height: 24px;
  background: ${DARK};
`
const HelpLine = styled.footer`
  display: flex;
  height: 20px;
  font-size: 10px;
  line-height: 28px;
  color: #bdbdbd;
  white-space: nowrap;
  overflow: hidden;
  flex-shrink: 0;
  p {
    margin: 0 0 0 10px;
  }
`

const TimeSlider = () => (
  <Bar $h={42} $line={2}>
    <Handle />
    <TimeTrack>
      {Array.from({ length: 46 }, (_, i) => (
        <Frame key={i} $on={i === 38}>
          {i + 1}
          {i === 38 && <b>39</b>}
        </Frame>
      ))}
    </TimeTrack>
    <CurrentTime aria-label='Current time' defaultValue='1' />
    <Transport>
      {['toStart', 'stepBack', 'stepKey'].map((n) => (
        <IconButton key={n} aria-label={n}><Icon name={n} size={18} /></IconButton>
      ))}
    </Transport>
  </Bar>
)

const RangeSlider = () => (
  <Bar $h={38} $line={2}>
    <Handle />
    <Field $w={92} $h={26} aria-label='Animation start' defaultValue='1' />
    <ToolGap $w={9} />
    <Field $w={92} $h={26} aria-label='Playback start' defaultValue='1' />
    <RangeTrack>
      <RangeBar>
        <i />
        1
        <Rest />
        46
        <i />
      </RangeBar>
    </RangeTrack>
    <Field $w={92} $h={26} aria-label='Playback end' defaultValue='46' />
    <ToolGap $w={8} />
    <Field $w={92} $h={26} aria-label='Animation end' defaultValue='200' />
    <Sep $w={14} />
    <Drop $wide><Tri size={9} outline /></Drop>
    <ToolGap $w={6} />
    <Field $w={106} $h={24} $flat aria-label='Character set' defaultValue='No Character Set' />
    <ToolGap $w={8} />
    <Drop $wide><Tri size={9} outline /></Drop>
    <Field $w={106} $h={24} $flat aria-label='Anim layer' defaultValue='No Anim Layer' />
    <Sep />
    <Select label='Frame rate' value='24 fps' w={98} h={20} />
  </Bar>
)

export default function App() {
  return (
    <Shell>
      <GlobalStyle />
      <TopMenu>
        <MenuBar
          items={[
            'File', 'Edit', 'Create', 'Select', 'Modify', 'Display', 'Windows', 'Mesh', 'Edit Mesh', 'Mesh Tools',
            'Mesh Display', 'Curves', 'Surfaces', 'Deform', 'UV', 'Generate', 'Cache', 'Exporter', 'SYBO Games', 'Help',
          ]}
          $h={17}
          $gap={14}
        />
        <Workspace>
          Workspace :
          <Select label='Workspace' value='Maya Classic*' w={105} />
        </Workspace>
      </TopMenu>
      <StatusLine />
      <ShelfPanel />
      <ToolBox />
      <Workbench>
        <Outliner />
        <ChannelBox />
        <Viewport />
        <AttributeEditor />
      </Workbench>
      <TimeSlider />
      <RangeSlider />
      <Bar $h={36} $line={2}>
        <Handle />
        <MelLabel>
          MEL
          <input />
        </MelLabel>
        <ToolGap $w={8} />
        <MelResult aria-label='Command result' readOnly />
      </Bar>
      <HelpLine>
        <Handle />
        <p>
          Move Tool: Use manipulator to move object(s). Ctrl+MMB+drag to move components along normals. Shift+drag
          manipulator axis or plane handles to extrude components or clone objects. Ctrl+Shift+LMB+drag to constrain
          movement to a connected edge. Use D or INSERT to change the pivot position and axis orientation.
        </p>
      </HelpLine>
      <KeyframeOffset />
      <GraphEditor />
      <JointDisplay />
      <Cursor width='14' height='20' viewBox='0 0 14 20'>
        <path d='M1 1v15l4-4 3 7 2-1-3-6h6z' fill='#fff' stroke='#222' />
      </Cursor>
    </Shell>
  )
}
